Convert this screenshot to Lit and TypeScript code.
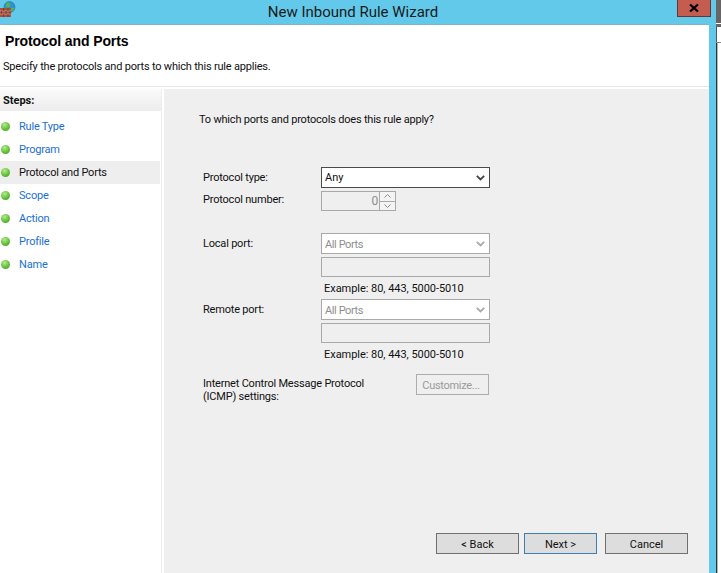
import { LitElement, html, css } from "lit";
import { customElement } from "lit/decorators.js";

const STEPS = ["Rule Type", "Program", "Protocol and Ports", "Scope", "Action", "Profile", "Name"];

const chevron = (cls: string) =>
  html`<svg class="chev ${cls}" width="9" height="6" viewBox="0 0 9 6"><path d="M0.8 0.8 L4.5 4.5 L8.2 0.8" fill="none" stroke-width="1.8"/></svg>`;

const appIcon = html`<svg class="appicon" width="18" height="18" viewBox="0 0 18 18">
  <circle cx="9.5" cy="7" r="5.5" fill="#2f8fd8" stroke="#2a6fa8" stroke-width="0.6"/>
  <path d="M6 3.5 Q9 1.5 10 4 Q11 6.5 8 7.5 Q5 7.5 6 3.5 Z" fill="#55b648"/>
  <path d="M11 8 Q14 7 14.5 9 Q13 11.5 11 11 Z" fill="#55b648"/>
  <rect x="0" y="8" width="11" height="9" fill="#a4503e"/>
  <path d="M0 11 H11 M0 14 H11" stroke="#d9a08e" stroke-width="0.8"/>
  <path d="M3.5 8 V11 M8 8 V11 M1.5 11 V14 M6 11 V14 M10 11 V14 M3.5 14 V17 M8 14 V17" stroke="#6e2f25" stroke-width="0.7"/>
</svg>`;

const combo = (text: string, on = false) =>
  html`<div class="combo ${on ? "on" : ""}"><span>${text}</span>${chevron(on ? "dark" : "pale")}</div>`;

@customElement("app-root")
export class AppRoot extends LitElement {
  static styles = css`
    :host { display: block; width: 721px; height: 573px; font-family: Roboto, "Liberation Sans", sans-serif; font-size: 11px; letter-spacing: -0.2px; color: #111; overflow: hidden; position: relative; background: #63c9ea; }
    * { box-sizing: border-box; }
    .frame { display: flex; height: 573px; }
    .window { width: 709px; display: flex; flex-direction: column; flex: none; }
    .gutter { width: 7px; flex: none; background: #63c9ea; }
    .strip { flex: 1; display: flex; flex-direction: column; background: #fff; }
    .strip .a { height: 23px; background: #666666; }
    .strip .b { height: 1px; background: #ffffff; }
    .strip .c { height: 3px; background: #666666; }
    .strip .d { height: 15px; border-left: 1px solid #555; background: #fff; }
    .strip .e { height: 1px; background: #8a8a8a; }
    .strip .f { flex: 1; display: flex; }
    .strip .f i { display: block; width: 1px; background: #333; }
    .strip .f b { display: block; width: 1px; background: #b5b5b5; }
    .titlebar { height: 25px; flex: none; display: flex; justify-content: center; align-items: center; font-size: 15px; letter-spacing: 0; padding-right: 3px; background: #63c9ea; border-bottom: 1px solid #7fb5cb; color: #1a1a1a; }
    .appicon { position: absolute; left: 0; top: 0; }
    .close { position: absolute; left: 677px; top: 0; width: 34px; height: 17px; background: #c45c50; border: 1px solid #5c3a38; border-top: none; display: flex; justify-content: center; align-items: center; }
    .header { height: 62px; flex: none; background: #fff; padding: 8px 0 0 5px; border-bottom: 1px solid #e6e6e6; }
    .h1 { font: bold 14px/17px "Liberation Sans", sans-serif; letter-spacing: -0.1px; margin: 0; color: #000; }
    .sub { line-height: 16px; margin-top: 9px; margin-left: -2px; }
    .body { flex: 1; display: flex; min-height: 0; background: #fff; padding-top: 2px; }
    .side { width: 162px; flex: none; background: #fff; border-right: 1px solid #ececec; }
    .steps-h { height: 22px; padding-left: 3px; font-weight: bold; letter-spacing: 0; line-height: 24px; background: linear-gradient(#fbfbfb, #ececec); width: 161px; }
    .steps { padding-top: 4px; }
    .step { height: 23px; display: flex; align-items: center; color: #1a6fd6; padding-left: 1px; width: 160px; }
    .step.on { background: #eeeeee; color: #111; }
    .dot { width: 9px; height: 9px; border-radius: 50%; background: radial-gradient(circle at 40% 30%, #b5ea90, #5cbc2f 60%, #3f9a24); flex: none; margin-right: 9px; }
    .main { flex: 1; background: #efefef; margin-left: 2px; padding: 23px 0 19px 35px; display: flex; flex-direction: column; }
    .q { line-height: 16px; }
    .form { margin: 39px 0 0 4px; width: 287px; display: grid; grid-template-columns: 118px 169px; }
    .lbl { line-height: 16px; padding-top: 3px; }
    .lbl.top { padding-top: 1px; }
    .combo { height: 21px; background: #fff; border: 1px solid #a9a9a9; display: flex; align-items: center; justify-content: space-between; padding: 0 4px 0 3px; color: #8d8d8d; }
    .combo span { padding-top: 1px; letter-spacing: -0.4px; }
    .combo.on { border-color: #4a4a4a; color: #111; }
    .combo.on span { padding-top: 0; letter-spacing: 0; }
    .chev { stroke: #a9a9a9; }
    .chev.dark { stroke: #444; }
    .input { height: 20px; border: 1px solid #a9a9a9; background: #efefef; margin-top: 3px; }
    .ex { height: 16px; line-height: 18px; letter-spacing: -0.04px; padding-left: 3px; margin-top: 3px; color: #111; }
    .full { grid-column: 2; }
    .spin { width: 75px; height: 20px; margin-top: 3px; display: flex; border: 1px solid #a9a9a9; }
    .spin .v { flex: 1; text-align: right; color: #8d8d8d; line-height: 18px; padding-right: 1px; font-size: 12px; }
    .arrows { width: 16px; display: flex; flex-direction: column; border-left: 1px solid #a9a9a9; }
    .arrows div { flex: 1; display: flex; align-items: center; justify-content: center; background: #f4f4f4; }
    .arrows div + div { border-top: 1px solid #a9a9a9; }
    .arrows path { fill: none; stroke: #8a8a8a; stroke-width: 1; }
    .group { margin-top: 22px; }
    .next-row { margin-top: 3px; }
    .icmp { display: grid; grid-template-columns: 213px 73px; margin: 12px 0 0 4px; }
    .icmp .lbl { line-height: 13px; padding-top: 3px; }
    .btn { height: 21px; background: #dddddd; border: 1px solid #707070; display: flex; align-items: center; justify-content: center; padding-top: 2px; color: #111; letter-spacing: 0; }
    .btn.def { border-color: #3c7fb1; width: 73px; margin-left: 5px; }
    .btn.wide { width: 83px; }
    .btn.cancel { margin-left: 8px; }
    .btn.dis { background: #efefef; border-color: #adadad; color: #9a9a9a; letter-spacing: -0.3px; padding-right: 3px; }
    .footer { margin: auto 0 0 237px; display: flex; }
  `;

  render() {
    return html`<div class="frame">
      <div class="window">
        <div class="titlebar"><span>New Inbound Rule Wizard</span></div>
        <div class="header">
          <h1 class="h1">Protocol and Ports</h1>
          <div class="sub">Specify the protocols and ports to which this rule applies.</div>
        </div>
        <div class="body">
          <div class="side">
            <div class="steps-h">Steps:</div>
            <div class="steps">
              ${STEPS.map((s, i) => html`<div class="step ${i === 2 ? "on" : ""}"><span class="dot"></span>${s}</div>`)}
            </div>
          </div>
          <div class="main">
            <div class="q">To which ports and protocols does this rule apply?</div>
            <div class="form">
              <div class="lbl">Protocol type:</div>
              ${combo("Any", true)}
              <div class="lbl next-row top">Protocol number:</div>
              <div class="spin">
                <div class="v">0</div>
                <div class="arrows">
                  <div><svg width="7" height="4" viewBox="0 0 7 4"><path d="M0.5 3.5 L3.5 0.5 L6.5 3.5"/></svg></div>
                  <div><svg width="7" height="4" viewBox="0 0 7 4"><path d="M0.5 0.5 L3.5 3.5 L6.5 0.5"/></svg></div>
                </div>
              </div>
              <div class="lbl group">Local port:</div>
              <div class="group">${combo("All Ports")}</div>
              <div class="input full"></div>
              <div class="ex full">Example: 80, 443, 5000-5010</div>
              <div class="lbl next-row">Remote port:</div>
              <div class="next-row">${combo("All Ports")}</div>
              <div class="input full"></div>
              <div class="ex full">Example: 80, 443, 5000-5010</div>
            </div>
            <div class="icmp">
              <div class="lbl">Internet Control Message Protocol<br />(ICMP) settings:</div>
              <div class="btn dis">Customize...</div>
            </div>
            <div class="footer">
              <div class="btn wide">&lt; Back</div>
              <div class="btn def">Next &gt;</div>
              <div class="btn wide cancel">Cancel</div>
            </div>
          </div>
        </div>
      </div>
      <div class="gutter"></div>
      <div class="strip">
        <div class="a"></div><div class="b"></div><div class="c"></div><div class="d"></div><div class="e"></div>
        <div class="f"><i></i><b></b></div>
      </div>
    </div>
    ${appIcon}
    <div class="close"><svg width="10" height="8" viewBox="0 0 10 8"><path d="M1 0.5 L9 7.5 M9 0.5 L1 7.5" stroke="#000" stroke-width="2.2"/></svg></div>`;
  }
}
